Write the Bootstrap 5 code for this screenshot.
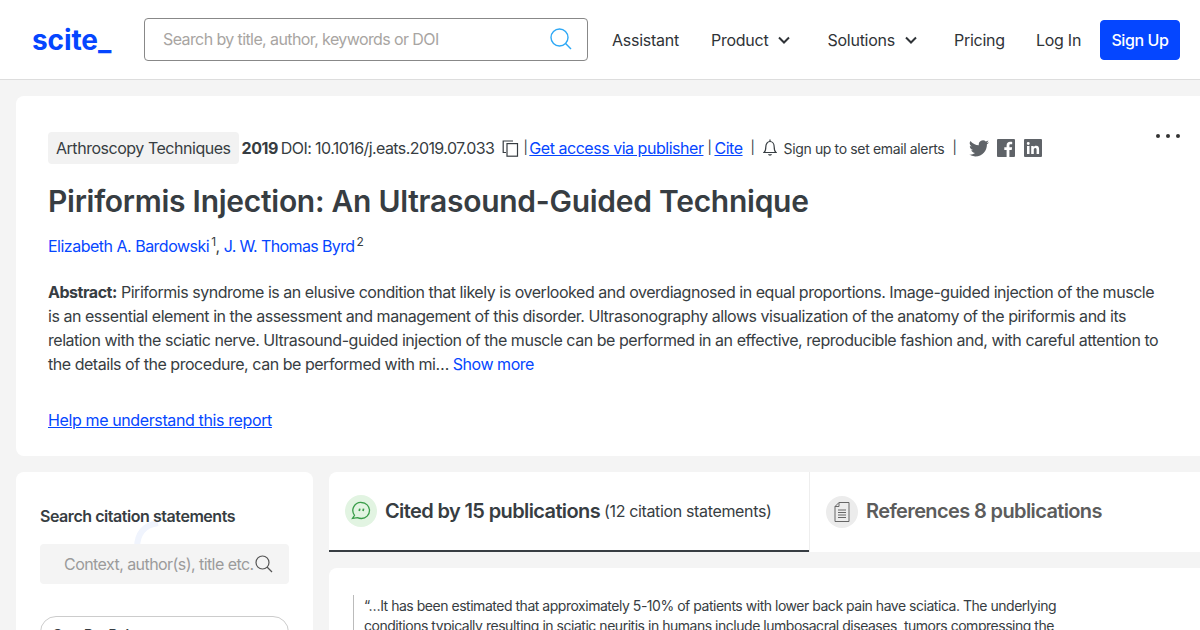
<!DOCTYPE html>
<html lang="en">
<head>
<meta charset="utf-8">
<title>Piriformis Injection</title>
<link href="https://cdn.jsdelivr.net/npm/bootstrap@5.3.0/dist/css/bootstrap.min.css" rel="stylesheet">
<style>
html,body{height:630px;overflow:hidden;background:#f4f4f4;font-family:Inter,"Liberation Sans",sans-serif;color:#373d42;letter-spacing:-.2px}
a{color:#0546ff}
.topbar{height:80px;background:#fff;border-bottom:1px solid #ddd;padding:0 20px 0 32px}
.brand{font-size:28px;font-weight:700;color:#0546ff;width:112px;letter-spacing:-.1px;line-height:1;text-decoration:none}
.searchbox{width:444px;height:43px;border:1px solid #888;border-radius:4px;padding:0 14px 2px 18px;font-size:16px;color:#a8a5a2;letter-spacing:-.6px}
.menu-link{font-size:16px;color:#2f3337;text-decoration:none;letter-spacing:-.25px}
.menu{margin-left:24px}
.chev{margin-left:2px}
.mgap-a{margin-left:32px}
.mgap-b{margin-left:37px}
.mgap-c{margin-left:31px}
.signup{background:#0546ff;border-color:#0546ff;color:#fff;font-size:16px;font-weight:500;height:40px;width:80px;padding:0;border-radius:4px;letter-spacing:-.4px;margin-left:auto}
.shell{padding:16px 0 0 16px}
.head-card{height:360px;background:#fff;border-radius:8px 0 0 8px;padding:36px 32px 32px;margin-bottom:16px}
.metaline{font-size:16px;height:32px;white-space:nowrap;letter-spacing:-.47px}
.journal{background:#f2f2f2;border-radius:4px;padding:0 8px;height:32px;line-height:32px;margin-right:3px}
.year{margin-right:3px}
.doi{letter-spacing:-.58px}
.sep{font-size:13px;display:inline-block;width:4px;text-align:center}
.m2{margin-left:2px}
.m43{margin:0 3px 0 4px}
.m7{margin-left:7px}
.m13{margin-left:13px}
.m9{margin-left:9px}
.small-alert{font-size:14px;letter-spacing:-.36px}
.dots{margin-left:auto;margin-right:-12px;margin-top:-24px;gap:6px}
.dots i{width:4px;height:4px;background:#333;border-radius:50%;display:block}
.art-title{font-size:30px;font-weight:600;margin:17px 0 0;line-height:40px;letter-spacing:-.27px;color:#373d42}
.authors{font-size:16px;margin-top:13px;line-height:24px;letter-spacing:-.5px}
.authors a{text-decoration:none}
.authors .second{letter-spacing:-.62px}
.authors sup{color:#373d42;font-size:12px;margin-left:2px}
.abstract{font-size:16px;line-height:24px;margin:22px 0 0;letter-spacing:-.465px}
.helplink{display:block;font-size:16px;line-height:24px;margin-top:32px;letter-spacing:-.38px}
.side{width:297px;flex:none;background:#fff;border-radius:8px 8px 0 0;height:200px;padding:32px 24px;position:relative}
.side-title{font-size:16px;font-weight:600;line-height:24px;letter-spacing:-.45px}
.side-arc{position:absolute;left:118px;top:48px}
.side-search{height:40px;background:#f4f4f4;border-radius:4px;margin-top:16px;padding:0 16px 0 24px;font-size:16px;color:#9b9b9b;white-space:nowrap;letter-spacing:-.56px;position:relative}
.side-search svg{flex:none}
.sort-box{height:40px;border:1px solid #ccc;border-radius:16px;margin-top:32px;padding:7px 12px;font-size:14px;font-weight:600}
.main-col{margin-left:16px;min-width:0}
.tabs-row{height:80px;background:#fff;border-radius:8px 0 0 0}
.tab-on{width:480px;border-bottom:2px solid #373d42;padding-left:16px;white-space:nowrap}
.tab-off{border-left:1px solid #eee;padding-left:16px;color:#5c5c5c;white-space:nowrap}
.tab-off .tab-big{margin-top:-2px}
.round{width:32px;height:32px;border-radius:50%;flex:none;margin-right:8px}
.round-g{background:#e2f4e2}
.round-x{background:#ececec}
.tab-big{font-size:20px;font-weight:600;letter-spacing:-.62px}
.tab-sub{font-size:16px;margin-left:4px;letter-spacing:-.35px}
.quote-card{background:#fff;border-radius:8px 0 0 0;margin-top:16px;height:100px;padding:27px 24px}
.quote{border-left:1px solid #bbb;padding:1px 0 0 10px;font-size:14px;line-height:20px;width:730px;white-space:nowrap;letter-spacing:-.475px}
</style>
</head>
<body>
<nav class="topbar d-flex align-items-center">
  <a class="brand" href="#">scite_</a>
  <div class="searchbox d-flex align-items-center justify-content-between">
    <span>Search by title, author, keywords or DOI</span>
    <svg width="24" height="24" viewBox="0 0 24 24" fill="none" stroke="#2ea8f5" stroke-width="1.4"><circle cx="10.500" cy="10.500" r="8.500"/><path d="M16.600 16.600 22 22"/></svg>
  </div>
  <div class="d-flex align-items-center flex-grow-1 menu">
    <a class="menu-link" href="#">Assistant</a>
    <a class="menu-link mgap-a d-flex align-items-center gap-2" href="#">Product <svg class="chev" width="12" height="8" viewBox="0 0 12 8" fill="none" stroke="#2f3337" stroke-width="2"><path d="M1 1.500 6 6.500 11 1.500"/></svg></a>
    <a class="menu-link mgap-b d-flex align-items-center gap-2" href="#">Solutions <svg class="chev" width="12" height="8" viewBox="0 0 12 8" fill="none" stroke="#2f3337" stroke-width="2"><path d="M1 1.500 6 6.500 11 1.500"/></svg></a>
    <a class="menu-link mgap-b" href="#">Pricing</a>
    <a class="menu-link mgap-c" href="#">Log In</a>
    <button class="btn signup" type="button">Sign Up</button>
  </div>
</nav>
<div class="shell">
  <section class="head-card">
    <div class="metaline d-flex align-items-center">
      <span class="journal">Arthroscopy Techniques</span>
      <strong class="fw-bold year">2019</strong>
      <span class="doi">DOI: 10.1016/j.eats.2019.07.033</span>
      <svg class="ms-2" width="17" height="17" viewBox="0 0 17 17" fill="none" stroke="#373d42" stroke-width="1.200"><path d="M11 1H1.200v11.500H4"/><rect x="5" y="3.600" width="10.500" height="12.600"/></svg>
      <span class="sep ms-1">|</span>
      <a class="m2" href="#">Get access via publisher</a>
      <span class="sep m43">|</span>
      <a href="#">Cite</a>
      <span class="sep ms-2">|</span>
      <svg class="ms-2" width="14" height="18" viewBox="0 0 14 18" fill="none" stroke="#373d42" stroke-width="1.200"><path d="M1 13.500h12c-1.500-1-1.800-2.500-1.800-5.500 0-3-1.700-5.500-4.200-5.500S2.800 5 2.800 8c0 3-.3 4.500-1.800 5.500Z"/><path d="M5.600 15.200c.3 1.200 2.500 1.200 2.800 0M7 .6v1.900"/></svg>
      <span class="small-alert m7">Sign up to set email alerts</span>
      <span class="sep ms-2">|</span>
      <svg class="m13" width="20" height="17" viewBox="0 0 24 20" fill="#5f6368"><path d="M24 2.400a9.800 9.800 0 0 1-2.800.8A4.900 4.900 0 0 0 23.300.5a9.900 9.900 0 0 1-3.100 1.200A4.900 4.900 0 0 0 11.800 6 13.900 13.900 0 0 1 1.700.9a4.900 4.900 0 0 0 1.500 6.600 4.900 4.900 0 0 1-2.200-.6 4.900 4.900 0 0 0 3.900 4.900 4.900 4.900 0 0 1-2.200.1 4.900 4.900 0 0 0 4.600 3.400A9.900 9.900 0 0 1 0 17.300 13.900 13.900 0 0 0 7.500 19.500c9.100 0 14.300-7.700 14-14.600A10 10 0 0 0 24 2.400Z"/></svg>
      <svg class="ms-2" width="18" height="18" viewBox="0 0 18 18"><rect width="18" height="18" rx="1" fill="#5f6368"/><path fill="#fff" d="M12.400 18v-7h2.300l.4-2.700h-2.700V6.600c0-.8.2-1.300 1.300-1.300h1.500V2.900c-.3 0-1.100-.1-2.100-.1-2.100 0-3.500 1.300-3.500 3.600v1.900H7.300V11h2.300v7Z"/></svg>
      <svg class="m9" width="18" height="18" viewBox="0 0 18 18"><rect width="18" height="18" rx="1" fill="#5f6368"/><path fill="#fff" d="M3 7h2.500v8H3Zm1.250-4a1.450 1.450 0 1 1 0 2.900 1.450 1.450 0 0 1 0-2.900ZM7.200 7h2.400v1.100c.4-.7 1.300-1.300 2.500-1.300 2.500 0 3 1.600 3 3.800V15h-2.500v-3.900c0-1 0-2.200-1.300-2.200s-1.500 1-1.500 2.100v4H7.200Z"/></svg>
      <div class="dots d-flex"><i></i><i></i><i></i></div>
    </div>
    <h1 class="art-title">Piriformis Injection: An Ultrasound-Guided Technique</h1>
    <div class="authors"><a href="#">Elizabeth A. Bardowski</a><sup>1</sup>, <a class="second" href="#">J. W. Thomas Byrd</a><sup>2</sup></div>
    <p class="abstract"><strong>Abstract:</strong> Piriformis syndrome is an elusive condition that likely is overlooked and overdiagnosed in equal proportions. Image-guided injection of the muscle is an essential element in the assessment and management of this disorder. Ultrasonography allows visualization of the anatomy of the piriformis and its relation with the sciatic nerve. Ultrasound-guided injection of the muscle can be performed in an effective, reproducible fashion and, with careful attention to the details of the procedure, can be performed with mi… <a class="text-decoration-none" href="#">Show more</a></p>
    <a class="helplink" href="#">Help me understand this report</a>
  </section>
  <div class="d-flex">
    <aside class="side">
      <svg class="side-arc" width="26" height="28" viewBox="0 0 26 28" fill="none" stroke="#f0f4fd" stroke-width="6"><path d="M3 28C3 14 10 5 24 3"/></svg>
      <div class="side-title position-relative">Search citation statements</div>
      <div class="side-search d-flex align-items-center justify-content-between">
        <span>Context, author(s), title etc.</span>
        <svg width="18" height="18" viewBox="0 0 18 18" fill="none" stroke="#555" stroke-width="1.200"><circle cx="7.500" cy="7.500" r="6.500"/><path d="M12 12l5 5"/></svg>
      </div>
      <div class="sort-box">Sort By: Relevance</div>
    </aside>
    <main class="main-col flex-grow-1">
      <div class="tabs-row d-flex">
        <div class="tab-on d-flex align-items-center">
          <span class="round round-g d-flex align-items-center justify-content-center">
            <svg width="20" height="20" viewBox="0 0 20 20" fill="none" stroke="#3a9d4a" stroke-width="1.300"><path d="M10.500 1.500a8 8 0 0 1 0 16c-1.300 0-3-.3-4-.8l-5 .8 2-3.200A8 8 0 0 1 10.500 1.500Z"/><path stroke-width="1.700" d="M8.800 7.600 8.200 10M12.600 7.600 12 10"/></svg>
          </span>
          <span class="tab-big">Cited by 15 publications</span>
          <span class="tab-sub">(12 citation statements)</span>
        </div>
        <div class="tab-off d-flex align-items-center flex-grow-1">
          <span class="round round-x d-flex align-items-center justify-content-center">
            <svg width="16" height="20" viewBox="0 0 16 20" fill="none" stroke="#666" stroke-width="1"><path d="M5 .5h10v19H1V4.500Zm0 0v4H1"/><path stroke-width="1.200" d="M4 8h8M4 10.500h8M4 13h8M4 15.500h8"/></svg>
          </span>
          <span class="tab-big">References 8 publications</span>
        </div>
      </div>
      <div class="quote-card">
        <div class="quote">“…It has been estimated that approximately 5-10% of patients with lower back pain have sciatica. The underlying<br>conditions typically resulting in sciatic neuritis in humans include lumbosacral diseases, tumors compressing the</div>
      </div>
    </main>
  </div>
</div>
<script src="https://cdn.jsdelivr.net/npm/bootstrap@5.3.0/dist/js/bootstrap.bundle.min.js"></script>
</body>
</html>
